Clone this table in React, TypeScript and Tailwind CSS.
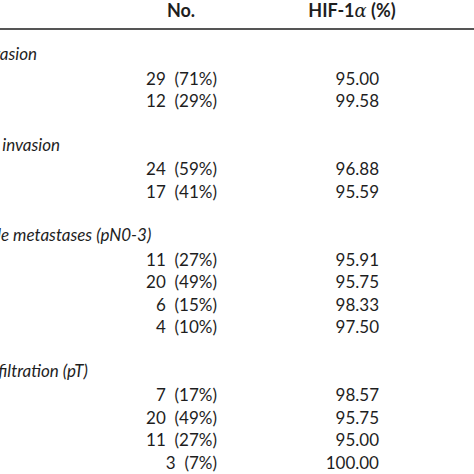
import { FC } from 'react'

type Group = {
  label: string
  offset: string
  rows: [string, string][]
}

const GROUPS: Group[] = [
  {
    label: 'Lymphatic invasion',
    offset: '-ml-[97px]',
    rows: [
      ['29 (71%)', '95.00'],
      ['12 (29%)', '99.58'],
    ],
  },
  {
    label: 'Venous invasion',
    offset: '-ml-[53px]',
    rows: [
      ['24 (59%)', '96.88'],
      ['17 (41%)', '95.59'],
    ],
  },
  {
    label: 'Lymph node metastases (pN0-3)',
    offset: '-ml-[76px]',
    rows: [
      ['11 (27%)', '95.91'],
      ['20 (49%)', '95.75'],
      ['6 (15%)', '98.33'],
      ['4 (10%)', '97.50'],
    ],
  },
  {
    label: 'Tumour infiltration (pT)',
    offset: '-ml-[72px]',
    rows: [
      ['7 (17%)', '98.57'],
      ['20 (49%)', '95.75'],
      ['11 (27%)', '95.00'],
      ['3 (7%)', '100.00'],
    ],
  },
]

const Row: FC<{ no: string; hif: string }> = ({ no, hif }) => {
  const [n, pct] = no.split(' ')
  return (
    <div className="flex h-[22.5px] items-center">
      <div className="w-[217px] text-right whitespace-pre">
        {n}
        {'  '}
        {pct}
      </div>
      <div className="w-[162px] text-right">{hif}</div>
    </div>
  )
}

export default function App() {
  return (
    <div
      className="w-[474px] h-[474px] overflow-hidden bg-white text-[#1e1e1e] text-[17px] leading-[22.5px]"
      style={{ fontFamily: 'Lato, "Open Sans", sans-serif' }}
    >
      {/* Header */}
      <div className="flex h-[20px] items-center font-bold text-[18px] leading-[20px]">
        <div className="w-[145px]" />
        <div className="w-[72px] text-center">No.</div>
        <div className="w-[86px]" />
        <div className="w-[98px] text-center whitespace-nowrap">
          HIF-1<span className="italic font-normal" style={{ fontFamily: '"DejaVu Serif", serif' }}>α</span> (%)
        </div>
      </div>
      <div className="mt-[8px] h-[2px] bg-[#555]" />

      {/* Body */}
      <div className="pt-[13px]">
        {GROUPS.map((g, i) => (
          <div key={g.label} className={i === 0 ? '' : 'mt-[21px]'}>
            <div className={`h-[22.5px] italic whitespace-nowrap ${g.offset}`}>{g.label}</div>
            <div className="pt-[2px]">
              {g.rows.map(([no, hif], j) => (
                <Row key={j} no={no} hif={hif} />
              ))}
            </div>
          </div>
        ))}
      </div>
    </div>
  )
}
